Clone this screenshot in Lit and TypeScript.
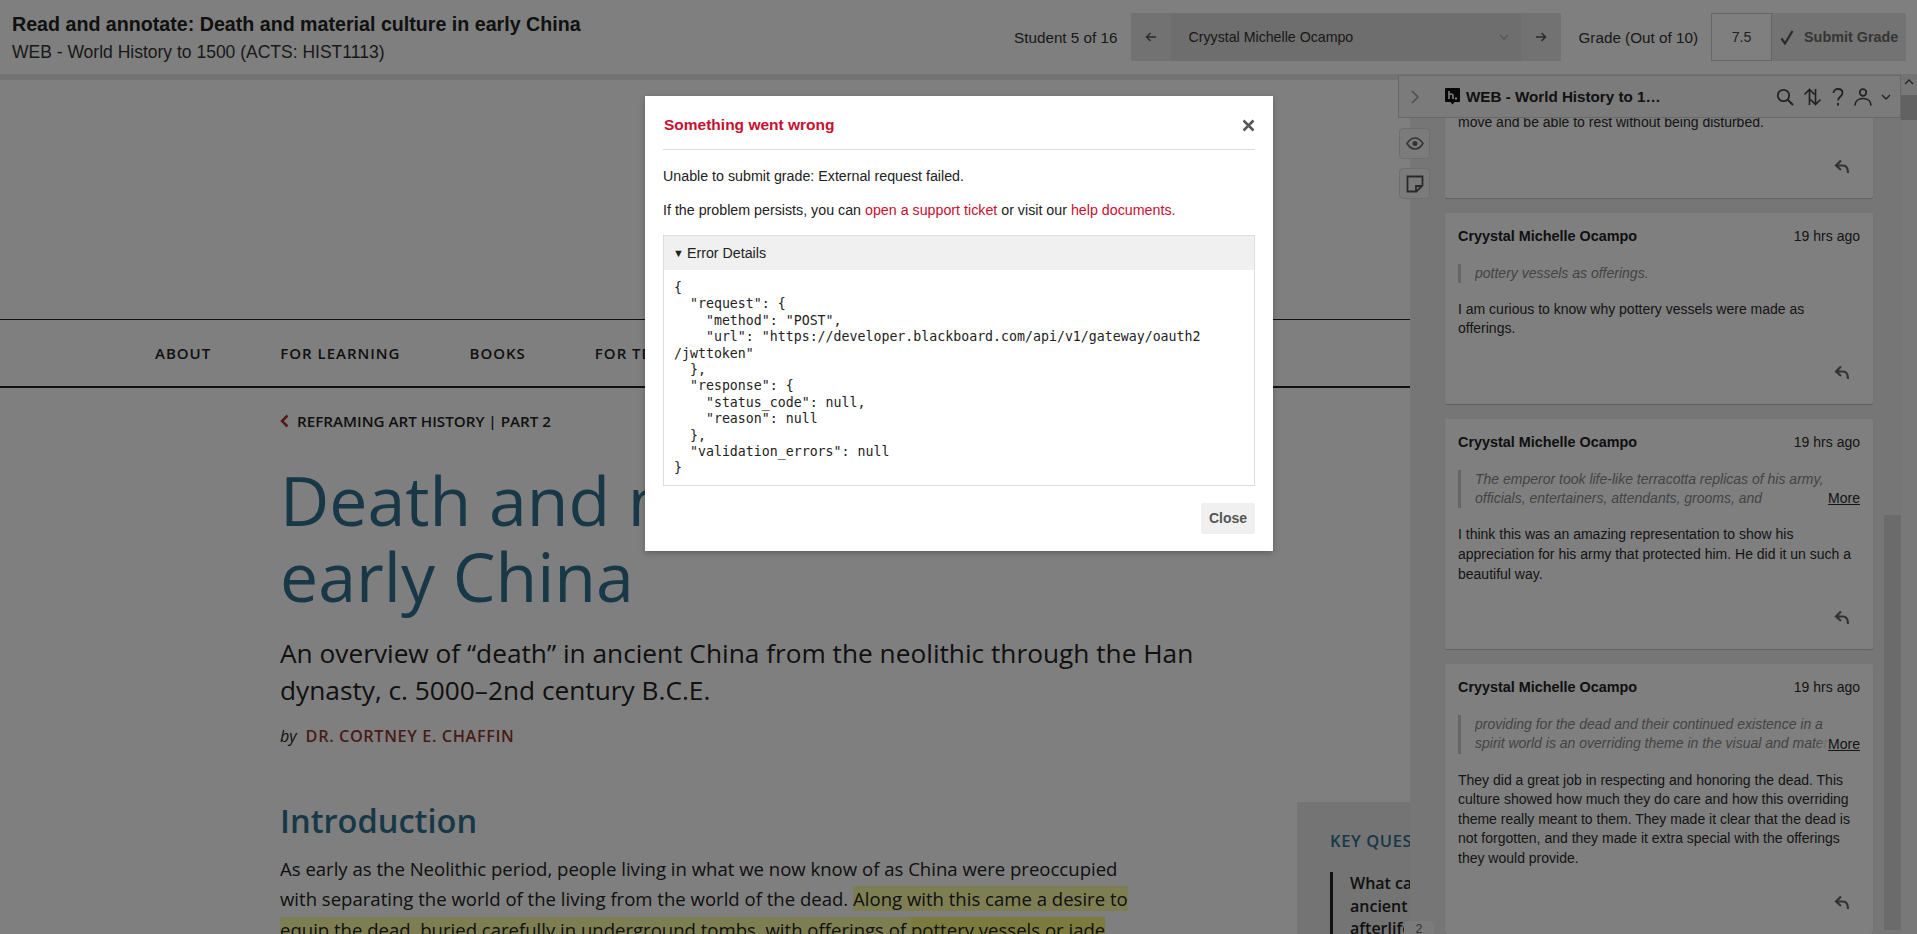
import { LitElement, html, css } from "lit";
import { customElement } from "lit/decorators.js";

const reply = html`<svg class="reply" width="16" height="15" viewBox="0 0 16 15"><path d="M7 1.500 2 6.500 7 11M2.500 6.500H9c3 0 5 2 5 7.500" fill="none" stroke="#666" stroke-width="2.200"/></svg>`;

const json = `{
  "request": {
    "method": "POST",
    "url": "https://developer.blackboard.com/api/v1/gateway/oauth2
/jwttoken"
  },
  "response": {
    "status_code": null,
    "reason": null
  },
  "validation_errors": null
}`;

@customElement("app-root")
export class AppRoot extends LitElement {
  static styles = css`
    :host { display: block; position: relative; height: 934px; overflow: hidden; background: #fff; font-family: "Liberation Sans", Arial, sans-serif; color: #222; }
    * { box-sizing: border-box; }
    .top { display: flex; align-items: center; height: 80px; padding: 0 11px 0 12px; border-bottom: 6px solid #e6e6e6; font-size: 15.250px; }
    .heading { flex: 1; min-width: 0; padding-top: 2px; }
    .heading h1 { margin: 0; font-size: 19.650px; line-height: 24px; font-weight: 700; color: #222; }
    .heading div { font-size: 17.500px; line-height: 24px; color: #333; margin-top: 4px; }
    .count { margin-right: 14px; color: #333; }
    .stepper { display: flex; align-items: stretch; width: 430px; height: 48px; background: #e5e5e5; color: #333; margin-right: 17px; }
    .step { width: 40px; display: flex; align-items: center; justify-content: center; flex: none; }
    .select { flex: 1; background: #dcdcdc; display: flex; align-items: center; justify-content: space-between; padding: 0 12px 0 17px; font-size: 14.200px; }
    .gradelabel { margin-right: 13px; color: #333; white-space: nowrap; }
    .grade { width: 61px; height: 48px; border: 1px solid #ccc; display: flex; align-items: center; justify-content: center; color: #444; font-size: 14.200px; }
    .submit { width: 134px; height: 48px; background: #e6e6e6; display: flex; align-items: center; gap: 10px; padding-left: 8px; font-weight: 700; font-size: 14.400px; color: #6b6b6b; white-space: nowrap; }

    .main { display: flex; height: 854px; }
    .article { flex: 1; min-width: 0; overflow: hidden; }
    .nav { display: flex; align-items: center; gap: 69px; margin-top: 239px; height: 69px; padding-left: 155px; border-top: 1px solid #222; border-bottom: 2px solid #222; font: 600 15px "Open Sans", sans-serif; letter-spacing: 1px; white-space: nowrap; color: #222; overflow: hidden; }
    .col { padding-left: 280px; }
    .crumb { display: flex; align-items: center; gap: 8px; height: 20px; margin-top: 23px; font: 600 15.200px/20px "Open Sans", sans-serif; color: #222; }
    h1.title { margin: 31px 0 0; width: 1000px; font: 400 68px/76px "Open Sans", sans-serif; color: #31708f; }
    .sub { margin: 21px 0 0; width: 930px; font: 400 26.250px/37px "Open Sans", sans-serif; color: #222; }
    .by { display: flex; align-items: baseline; gap: 9px; margin-top: 15px; font: italic 400 16px/24px "Open Sans", sans-serif; color: #222; }
    .by b { font: 600 16.300px/24px "Open Sans", sans-serif; letter-spacing: .6px; color: #8e3a30; }
    .lower { display: flex; margin-top: 54px; padding-left: 280px; height: 140px; }
    .intro { width: 852px; }
    .intro h2 { margin: 0; font: 600 32.600px/38px "Open Sans", sans-serif; color: #31708f; }
    .intro p { margin: 13.500px 0 0; font: 400 18.560px/30.700px "Open Sans", sans-serif; color: #222; }
    mark { background: #fdfda6; color: inherit; }
    mark.deep { background: #f7f77c; }
    .aside { margin-left: auto; width: 113px; flex: none; background: #e8e8e8; padding: 28px 0 0 33px; overflow: hidden; white-space: nowrap; }
    .aside h3 { margin: 0; font: 600 16.500px/22px "Open Sans", sans-serif; letter-spacing: .6px; color: #31708f; }
    .aside div { margin-top: 20px; border-left: 3px solid #222; padding-left: 17px; font: 600 16px/22.500px "Open Sans", sans-serif; color: #222; }

    .side { width: 507px; flex: none; display: flex; }
    .panel { width: 491px; position: relative; background: #ededed; overflow: hidden; }
    .list { padding: 0 28px 0 35px; display: flex; flex-direction: column; gap: 15px; }
    .card { background: #fff; border-radius: 2px; box-shadow: 0 1px 1px rgba(0,0,0,.2); padding: 13px 13px 0; font-size: 14px; line-height: 19.600px; color: #2b2b2b; }
    .card.first { padding-top: 33px; }
    .who { display: flex; justify-content: space-between; line-height: 20px; }
    .who b { color: #222; font-size: 14.400px; }
    .quote { position: relative; margin-top: 18px; padding-left: 14px; border-left: 3px solid #ccc; font-style: italic; color: #888; line-height: 19.200px; overflow: hidden; }
    .quote div { white-space: nowrap; overflow: hidden; }
    .more { position: absolute; right: 0; bottom: 1px; font-style: normal; color: #2b2b2b; text-decoration: underline; background: #fff; box-shadow: -8px 0 7px -2px #fff; line-height: 18px; }
    .body { margin-top: 17px; }
    .foot { display: flex; justify-content: flex-end; padding: 26px 10px 16px 0; height: 65px; }
    .reply { display: block; }
    .thumb { position: absolute; right: 0; top: 435px; bottom: 4px; width: 17px; background: #d6d6d6; }
    .outer { width: 16px; background: #f1f1f1; flex: none; position: relative; }
    .outer i { position: absolute; left: 0; right: 0; top: 15px; height: 25px; background: #c4c4c4; }

    .sidehead { position: absolute; left: 1398px; top: 75px; width: 503px; height: 43px; background: #f7f7f7; border: 1px solid #d0d0d0; display: flex; align-items: center; padding: 0 9px 0 12px; }
    .brand { display: flex; align-items: center; gap: 6px; margin-left: 26px; font-weight: 700; font-size: 15.200px; color: #222; flex: 1; white-space: nowrap; }
    .tools { display: flex; align-items: center; gap: 9px; }
    .tab { position: absolute; left: 1399px; width: 31px; height: 31px; background: #f7f7f7; border: 1px solid #ddd; border-radius: 4px; display: flex; align-items: center; justify-content: center; }
    .tab.a { top: 128px; }
    .tab.b { top: 168px; }
    .upcaret { position: absolute; left: 1904px; top: 79px; }
    .page { position: absolute; left: 1404px; top: 921px; width: 30px; height: 14px; background: #f7f7f7; border-radius: 5px 5px 0 0; text-align: center; font-size: 12.500px; line-height: 17px; color: #666; }

    .overlay { position: absolute; inset: 0; background: rgba(0,0,0,.5); display: flex; justify-content: center; align-items: flex-start; padding: 96px 0 0 1px; }
    .modal { width: 628px; height: 455px; background: #fff; padding: 0 18px 18px; box-shadow: 0 2px 6px rgba(0,0,0,.25); font-size: 14.250px; line-height: 20px; color: #222; }
    .mhead { display: flex; align-items: center; justify-content: space-between; height: 54px; padding: 5px 0 0 1px; border-bottom: 1px solid #ddd; }
    .mhead strong { color: #c8102e; font-size: 15.500px; }
    .modal p { margin: 16px 0 14px; }
    .modal p + p { margin: 13px 0 15px; }
    .modal a { color: #c8102e; text-decoration: none; }
    .err { border: 1px solid #ddd; }
    .err header { height: 34px; background: #f0f0f0; display: flex; align-items: center; gap: 3px; padding-left: 9px; }
    .err header i { font-style: normal; font-size: 11px; }
    pre { margin: 0; padding: 10px 10px 8px 10px; font: 13.260px/16.400px "DejaVu Sans Mono", monospace; color: #222; white-space: pre-wrap; }
    .actions { display: flex; justify-content: flex-end; margin-top: 17px; }
    .close { width: 54px; height: 31px; background: #f0f0f0; border-radius: 2px; display: flex; align-items: center; justify-content: center; font-weight: 700; color: #555; font-size: 14px; }
  `;

  render() {
    return html`
      <div class="top">
        <div class="heading">
          <h1>Read and annotate: Death and material culture in early China</h1>
          <div>WEB - World History to 1500 (ACTS: HIST1113)</div>
        </div>
        <span class="count">Student 5 of 16</span>
        <div class="stepper">
          <span class="step"><svg width="12" height="10" viewBox="0 0 12 10"><path d="M11 5H2M5.500 1 1.500 5l4 4" fill="none" stroke="#555" stroke-width="1.500"/></svg></span>
          <div class="select">Cryystal Michelle Ocampo
            <svg width="10" height="6" viewBox="0 0 10 6"><path d="M1 1l4 4 4-4" fill="none" stroke="#aaa" stroke-width="1.300"/></svg>
          </div>
          <span class="step"><svg width="12" height="10" viewBox="0 0 12 10"><path d="M1 5h9M6.500 1l4 4-4 4" fill="none" stroke="#555" stroke-width="1.500"/></svg></span>
        </div>
        <span class="gradelabel">Grade (Out of 10)</span>
        <div class="grade">7.5</div>
        <div class="submit">
          <svg width="14" height="15" viewBox="0 0 14 15"><path d="M1.500 8.500 5 13.500 12.500 1" fill="none" stroke="#555" stroke-width="2.200"/></svg>
          Submit Grade
        </div>
      </div>

      <div class="main">
        <div class="article">
          <div class="nav"><span>ABOUT</span><span>FOR LEARNING</span><span>BOOKS</span><span>FOR TEACHERS</span></div>
          <div class="col">
            <div class="crumb">
              <svg width="9" height="14" viewBox="0 0 9 14"><path d="M7.500 1.500 2 7l5.500 5.500" fill="none" stroke="#a33" stroke-width="2.500"/></svg>
              REFRAMING ART HISTORY | PART 2
            </div>
            <h1 class="title">Death and material culture in early China</h1>
            <p class="sub">An overview of “death” in ancient China from the neolithic through the Han dynasty, c. 5000–2nd century B.C.E.</p>
            <div class="by">by <b>DR. CORTNEY E. CHAFFIN</b></div>
          </div>
          <div class="lower">
            <div class="intro">
              <h2>Introduction</h2>
              <p>As early as the Neolithic period, people living in what we now know of as China were preoccupied with separating the world of the living from the world of the dead. <mark>Along with this came a desire to equip the dead, buried carefully in underground tombs, with offerings of </mark><mark class="deep">pottery vessels or jade</mark></p>
            </div>
            <div class="aside">
              <h3>KEY QUESTIONS</h3>
              <div>What can<br />ancient China<br />afterlife</div>
            </div>
          </div>
        </div>

        <div class="side">
          <div class="panel">
            <div class="list">
              <div class="card first">
                <div>move and be able to rest without being disturbed.</div>
                <div class="foot">${reply}</div>
              </div>
              <div class="card">
                <div class="who"><b>Cryystal Michelle Ocampo</b><span>19 hrs ago</span></div>
                <div class="quote"><div>pottery vessels as offerings.</div></div>
                <div class="body">I am curious to know why pottery vessels were made as offerings.</div>
                <div class="foot">${reply}</div>
              </div>
              <div class="card">
                <div class="who"><b>Cryystal Michelle Ocampo</b><span>19 hrs ago</span></div>
                <div class="quote"><div>The emperor took life-like terracotta replicas of his army,</div><div>officials, entertainers, attendants, grooms, and</div><span class="more">More</span></div>
                <div class="body">I think this was an amazing representation to show his appreciation for his army that protected him. He did it un such a beautiful way.</div>
                <div class="foot">${reply}</div>
              </div>
              <div class="card">
                <div class="who"><b>Cryystal Michelle Ocampo</b><span>19 hrs ago</span></div>
                <div class="quote"><div>providing for the dead and their continued existence in a</div><div>spirit world is an overriding theme in the visual and material</div><span class="more">More</span></div>
                <div class="body">They did a great job in respecting and honoring the dead. This culture showed how much they do care and how this overriding theme really meant to them. They made it clear that the dead is not forgotten, and they made it extra special with the offerings they would provide.</div>
                <div class="foot">${reply}</div>
              </div>
            </div>
            <div class="thumb"></div>
          </div>
          <div class="outer"><i></i></div>
        </div>
      </div>

      <div class="sidehead">
        <svg width="8" height="14" viewBox="0 0 8 14"><path d="M1 1l6 6-6 6" fill="none" stroke="#999" stroke-width="1.500"/></svg>
        <div class="brand">
          <svg width="15" height="17" viewBox="0 0 15 17"><path d="M1 0h13a1 1 0 0 1 1 1v12a1 1 0 0 1-1 1H9.500L7.500 16.500 5.500 14H1a1 1 0 0 1-1-1V1a1 1 0 0 1 1-1z" fill="#111"/><path d="M4 3v8M4 7c1-1.500 4-1.500 4 .5V11" fill="none" stroke="#fff" stroke-width="1.600"/><rect x="10" y="9.500" width="2" height="2" fill="#fff"/></svg>
          WEB - World History to 1…
        </div>
        <div class="tools">
          <svg width="18" height="18" viewBox="0 0 18 18"><circle cx="7.500" cy="7.500" r="5.700" fill="none" stroke="#444" stroke-width="1.800"/><path d="M11.500 11.500 17 17" stroke="#444" stroke-width="2"/></svg>
          <svg width="19" height="18" viewBox="0 0 19 18"><path d="M6.500 17V2M1.500 6.500 6.500 1.500 11.500 6.500M12.500 1v15M7.500 11.500l5 5 5-5" fill="none" stroke="#444" stroke-width="1.700"/></svg>
          <svg width="14" height="18" viewBox="0 0 14 18"><path d="M2.500 5C2.500 2.500 4.500 1 7 1s4.500 1.500 4.500 4c0 3.500-4.500 3.500-4.500 7.500" fill="none" stroke="#444" stroke-width="1.800"/><rect x="6" y="15" width="2" height="2.500" fill="#444"/></svg>
          <svg width="18" height="18" viewBox="0 0 18 18"><circle cx="9" cy="4.500" r="3.300" fill="none" stroke="#444" stroke-width="1.700"/><path d="M1 17.500c0-4.500 3.500-7 8-7s8 2.500 8 7" fill="none" stroke="#444" stroke-width="1.700"/></svg>
          <svg width="10" height="6" viewBox="0 0 10 6"><path d="M1 1l4 4 4-4" fill="none" stroke="#444" stroke-width="1.400"/></svg>
        </div>
      </div>
      <div class="tab a"><svg width="18" height="13" viewBox="0 0 18 13"><path d="M1 6.500C3.500 2.500 6 1 9 1s5.500 1.500 8 5.500c-2.500 4-5 5.500-8 5.500s-5.500-1.500-8-5.500z" fill="none" stroke="#666" stroke-width="1.500"/><circle cx="9" cy="6.500" r="2.500" fill="#666"/></svg></div>
      <div class="tab b"><svg width="18" height="18" viewBox="0 0 18 18"><path d="M16.500 10.500V1.500H1.500v15h9zM10 16.500V11h6.500" fill="none" stroke="#555" stroke-width="1.800"/></svg></div>
      <svg class="upcaret" width="10" height="6" viewBox="0 0 10 6"><path d="M1 5l4-4 4 4" fill="none" stroke="#555" stroke-width="1.500"/></svg>
      <div class="page">2</div>

      <div class="overlay">
        <div class="modal">
          <div class="mhead">
            <strong>Something went wrong</strong>
            <svg width="13" height="13" viewBox="0 0 13 13"><path d="M1.500 1.500l10 10m0-10-10 10" stroke="#555" stroke-width="2.500"/></svg>
          </div>
          <p>Unable to submit grade: External request failed.</p>
          <p>If the problem persists, you can <a>open a support ticket</a> or visit our <a>help documents.</a></p>
          <div class="err">
            <header><i>▼</i> Error Details</header>
            <pre>${json}</pre>
          </div>
          <div class="actions"><span class="close">Close</span></div>
        </div>
      </div>
    `;
  }
}
